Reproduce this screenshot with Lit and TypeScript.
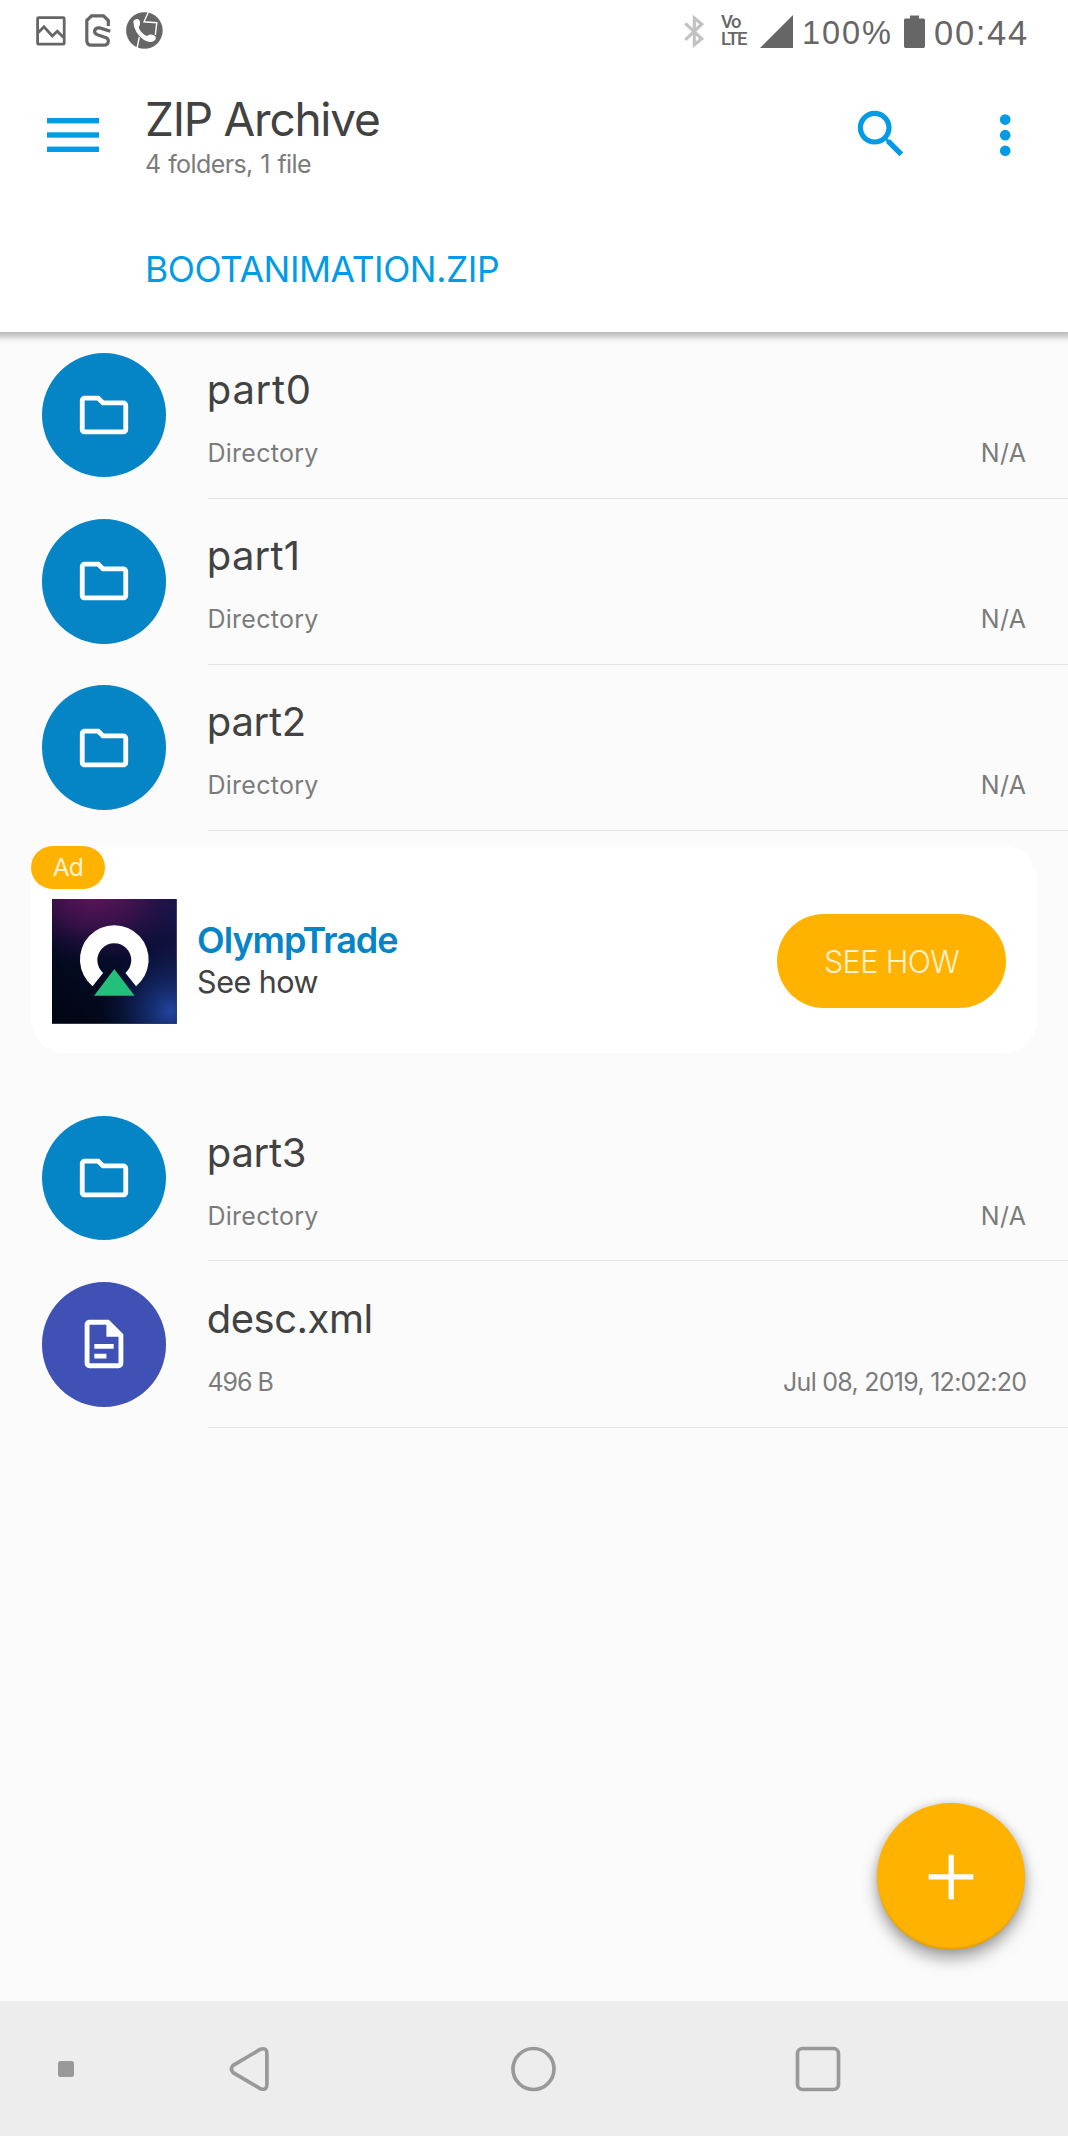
import { LitElement, html, css, svg } from "lit";
import { customElement, property } from "lit/decorators.js";

interface Entry {
  name: string;
  detail: string;
  meta: string;
  kind: "folder" | "file";
  tracking: number;
}

const FOLDER = "M9.17 6l2 2H20v10H4V6h5.17M10 4H4c-1.1 0-1.99.9-1.99 2L2 18c0 1.1.9 2 2 2h16c1.1 0 2-.9 2-2V8c0-1.1-.9-2-2-2h-8l-2-2z";
const FILE = "M6 2c-1.1 0-2 .9-2 2v16c0 1.1.9 2 2 2h12c1.1 0 2-.9 2-2V8l-6-6H6zm0 2h7v5h5v11H6V4zM8 12h8v2H8zM8 16h5v2H8z";

const folder = (name: string, tracking: number): Entry => ({
  name, detail: "Directory", meta: "N/A", kind: "folder", tracking,
});

const ABOVE_AD: Entry[] = [folder("part0", 0.7), folder("part1", 0.2), folder("part2", -0.3)];
const BELOW_AD: Entry[] = [
  folder("part3", -0.3),
  { name: "desc.xml", detail: "496 B", meta: "Jul 08, 2019, 12:02:20", kind: "file", tracking: -0.5 },
];

@customElement("status-bar")
export class StatusBar extends LitElement {
  static styles = css`
    :host { display: flex; justify-content: space-between; align-items: flex-start; height: 60px; padding: 12px 39px 0 36px; box-sizing: border-box; color: #666; font-family: "Liberation Sans", Arial, sans-serif; }
    svg { display: block; flex: none; }
    .side { display: flex; align-items: flex-start; }
    .image { margin-top: 4px; }
    .note { margin: 2px 0 0 19px; }
    .call { margin-left: 14px; }
    .bt, .signal, .battery { margin-top: 2.5px; }
    .volte { margin: 2.3px 0 0 17px; width: 27px; font: 500 18.5px/16.7px Roboto, sans-serif; letter-spacing: -1.5px; }
    .volte span { display: block; white-space: nowrap; }
    .signal { margin-left: 12px; }
    .pct { font-size: 32.5px; line-height: 42px; letter-spacing: 1.9px; margin-left: 9px; width: 102px; }
    .clock { font-size: 34.5px; line-height: 42px; letter-spacing: 1.7px; margin-left: 9px; width: 95px; white-space: nowrap; }
  `;
  render() {
    return html`
      <div class="side">
        <svg class="image" width="30" height="30" viewBox="0 0 30 30" fill="none" stroke="#666" stroke-width="2.8">
          <rect x="1.6" y="1.6" width="26.6" height="26.6" rx="1" />
          <path d="M2.3 16.5L8 10.8L16.3 20L21.3 15.3L27.3 21.3" />
        </svg>
        <svg class="note" width="27" height="34" viewBox="0 0 27 34" fill="none" stroke="#666" stroke-width="3.2">
          <path d="M23.3 12V6.5L18.5 1.9H6.5L1.8 6.5V26.5Q1.8 31.2 6.5 31.2H18.5Q23.3 31.2 23.3 27Q23.3 24.6 20.5 23.5L12.5 20.8Q9.2 19.5 9.6 16.8Q10.6 13.2 14.8 13.9L25.3 17.2" />
        </svg>
        <svg class="call" width="37" height="37" viewBox="0 0 37 37">
          <circle cx="18.4" cy="18.5" r="18.3" fill="#666" />
          <path d="M22.3 .3L18 9.8L30.8 10.7L29.3 23M13.3 25L11 36.5" fill="none" stroke="#fff" stroke-width="1.4" />
          <path d="M7.3 9.5Q8 7 11 7Q13.5 7 14 10Q14.6 13 12.8 14.5Q12.6 18 18 22.5Q21 25 23.5 22.5Q27 22 29.5 24.5Q30.5 27 28 29Q24 31.5 18 28Q8 21 7.3 9.5Z" fill="#fff" />
        </svg>
      </div>
      <div class="side">
        <svg class="bt" width="20" height="33" viewBox="0 0 20 33" fill="none" stroke="#c2c2c2" stroke-width="3.1">
          <path d="M1.3 8.3L17.7 23.8L10.3 29.8V3L17.7 9.2L1.3 24.8" />
        </svg>
        <div class="volte"><span>Vo</span><span>LTE</span></div>
        <svg class="signal" width="33" height="33" viewBox="0 0 33 33"><path d="M33 0V33H0Z" fill="#666" /></svg>
        <div class="pct">100%</div>
        <svg class="battery" width="21" height="33" viewBox="0 0 21 33"><path d="M6 .5h9v3h4.5q1.5 0 1.5 1.5v26q0 2-1.5 2h-18q-1.5 0-1.5-2V5q0-1.5 1.5-1.5H6z" fill="#666" /></svg>
        <div class="clock">00:44</div>
      </div>
    `;
  }
}

@customElement("file-row")
export class FileRow extends LitElement {
  @property({ attribute: false }) entry!: Entry;
  static styles = css`
    :host { display: flex; height: 166.2px; }
    .avatar { flex: none; display: grid; place-items: center; width: 124.5px; height: 124.5px; margin: 20.6px 41.5px 0 41.8px; border-radius: 50%; background: #0584c6; }
    .avatar.file { background: #3f51b5; }
    .body { flex: 1; display: flex; flex-direction: column; box-sizing: border-box; padding: 33.7px 41.8px 0 0; border-bottom: 1px solid #e3e3e3; }
    .name { margin-left: -1px; font-size: 40px; line-height: 48px; color: #424242; }
    .sub { display: flex; justify-content: space-between; margin-top: 22.6px; font-size: 25px; line-height: 32px; color: #7b7b7b; }
    .detail { margin-left: -0.4px; letter-spacing: 0.27px; }
    .meta { letter-spacing: 0.3px; }
    .file-text .detail { letter-spacing: -1.05px; }
    .file-text .meta { letter-spacing: -0.73px; }
  `;
  render() {
    const e = this.entry;
    return html`
      <div class="avatar ${e.kind}">
        <svg width="58" height="58" viewBox="0 0 24 24" fill="#fff"><path fill-rule="evenodd" d=${e.kind === "folder" ? FOLDER : FILE} /></svg>
      </div>
      <div class="body ${e.kind}-text">
        <div class="name" style="letter-spacing:${e.tracking}px">${e.name}</div>
        <div class="sub"><span class="detail">${e.detail}</span><span class="meta">${e.meta}</span></div>
      </div>
    `;
  }
}

@customElement("ad-card")
export class AdCard extends LitElement {
  static styles = css`
    :host { display: block; height: 207px; margin: 15px 31.3px 42.3px 31px; background: #fff; border-radius: 34px; }
    .badge { display: grid; place-items: center; width: 73.6px; height: 43px; border-radius: 22px; background: #ffb300; color: #fff2d2; font-size: 24.5px; letter-spacing: -0.9px; }
    .content { display: flex; align-items: center; padding: 10px 30.7px 0 21px; }
    .logo { display: block; flex: none; }
    .texts { flex: 1; margin: -4.6px 0 0 20.3px; }
    .title { font-size: 36px; line-height: 44px; font-weight: 600; letter-spacing: -1.03px; color: #0584c6; }
    .desc { margin-top: 2.6px; font-size: 30.5px; line-height: 36px; letter-spacing: -0.5px; color: #424242; }
    .cta { display: grid; place-items: center; width: 229px; height: 94px; border-radius: 47px; background: #ffb300; color: #fff2d2; font-size: 30.5px; font-weight: 350; letter-spacing: -0.6px; }
  `;
  render() {
    return html`
      <div class="badge">Ad</div>
      <div class="content">
        <svg class="logo" width="124.8" height="124.8" viewBox="0 0 125 125">
          <defs>
            <linearGradient id="base" x1="0" y1="1" x2=".9" y2="0">
              <stop offset="0" stop-color="#020612" /><stop offset=".5" stop-color="#040b26" /><stop offset="1" stop-color="#161449" />
            </linearGradient>
            <radialGradient id="plum" cx=".32" cy="-.08" r=".62" gradientTransform="matrix(1.25 0 0 1 -.06 0)">
              <stop offset="0" stop-color="#681560" /><stop offset=".5" stop-color="#45124f" stop-opacity=".75" /><stop offset="1" stop-color="#1a1040" stop-opacity="0" />
            </radialGradient>
            <radialGradient id="blue" cx=".95" cy=".9" r=".55">
              <stop offset="0" stop-color="#21449e" /><stop offset="1" stop-color="#102560" stop-opacity="0" />
            </radialGradient>
          </defs>
          <rect width="125" height="125" fill="url(#base)" />
          <rect width="125" height="125" fill="url(#plum)" />
          <rect width="125" height="125" fill="url(#blue)" />
          <path d="M40.6 87.3A34.4 34.4 0 1 1 84.2 87.3L73.6 74A17 17 0 1 0 51.2 74Z" fill="#fff" />
          <path d="M62.4 70L82.7 97H42.1Z" fill="#22c07a" />
        </svg>
        <div class="texts"><div class="title">OlympTrade</div><div class="desc">See how</div></div>
        <div class="cta">SEE HOW</div>
      </div>
    `;
  }
}

@customElement("app-root")
export class AppRoot extends LitElement {
  static styles = css`
    :host { display: flex; flex-direction: column; position: relative; width: 1068px; height: 2136px; background: #fbfbfb; font-family: Inter, Roboto, sans-serif; overflow: hidden; }
    svg { display: block; flex: none; }
    header { position: relative; flex: none; height: 332.4px; box-sizing: border-box; background: #fff; }
    header::after { content: ""; position: absolute; left: 0; right: 0; top: 100%; height: 11px; background: linear-gradient(#bcbcbc, #cfcfcf 35%, #efefef 70%, #fbfbfb); }
    .toolbar { display: flex; align-items: flex-start; height: 188.4px; }
    .menu { margin: 58px 46px 0 46.5px; }
    .titles { flex: 1; padding-top: 34.3px; }
    .title { font-size: 46px; line-height: 50px; letter-spacing: -1.25px; color: #424242; }
    .count { margin-top: 3.3px; font-size: 25px; line-height: 32px; letter-spacing: -0.6px; word-spacing: 1.2px; color: #7b7b7b; }
    .search { margin-top: 43px; }
    .more { margin: 43.8px 31.6px 0 61.8px; }
    .crumb { padding-left: 145px; font-size: 35.5px; line-height: 44px; letter-spacing: -0.45px; color: #039be5; }
    main { flex: 1; }
    .fab { position: absolute; left: 877.2px; top: 1803px; width: 147.5px; height: 147px; border-radius: 50%; background: #ffb300; display: grid; place-items: center; box-shadow: 0 9px 16px rgba(0, 0, 0, 0.34), 0 0 9px rgba(0, 0, 0, 0.14), inset 0 -3px 2px -1px rgba(150, 100, 0, 0.25); }
    nav { flex: none; display: flex; align-items: center; height: 135px; box-sizing: border-box; padding-left: 57.7px; background: #ededed; }
    .back { margin-left: 154.5px; }
    .home { margin-left: 239.5px; }
    .recent { margin-left: 239.5px; }
  `;
  render() {
    const row = (entry: Entry) => html`<file-row .entry=${entry}></file-row>`;
    return html`
      <header>
        <status-bar></status-bar>
        <div class="toolbar">
          <svg class="menu" width="52.5" height="34" viewBox="0 0 52.5 34" fill="#039be5">${[0, 14.3, 28.6].map((y) => svg`<rect y=${y} width="52.5" height="5.4" />`)}</svg>
          <div class="titles">
            <div class="title">ZIP Archive</div>
            <div class="count">4 folders, 1 file</div>
          </div>
          <svg class="search" width="62.4" height="62.4" viewBox="0 0 24 24" fill="#039be5"><path d="M15.5 14h-.79l-.28-.27C15.41 12.59 16 11.11 16 9.5 16 5.91 13.09 3 9.5 3S3 5.91 3 9.5 5.91 16 9.5 16c1.61 0 3.09-.59 4.23-1.57l.27.28v.79l5 4.99L20.49 19l-4.99-5zm-6 0C7.01 14 5 11.99 5 9.5S7.01 5 9.5 5 14 7.01 14 9.5 11.99 14 9.5 14z" /></svg>
          <svg class="more" width="62.4" height="62.4" viewBox="0 0 24 24" fill="#039be5"><circle cx="12" cy="6" r="2.05" /><circle cx="12" cy="12" r="2.05" /><circle cx="12" cy="18" r="2.05" /></svg>
        </div>
        <div class="crumb">BOOTANIMATION.ZIP</div>
      </header>
      <main>
        ${ABOVE_AD.map(row)}
        <ad-card></ad-card>
        ${BELOW_AD.map(row)}
      </main>
      <nav>
        <svg width="16" height="16" viewBox="0 0 16 16"><rect width="16" height="16" rx="2.5" fill="#999" /></svg>
        <svg class="back" width="43" height="46" viewBox="0 0 43 46" fill="none" stroke="#999" stroke-width="3.7"><path d="M32.5 3.2L21 10L5.2 19.3Q1.6 23 5.2 26.7L32.5 42.8Q38.9 44.7 38.9 38.5V7.5Q38.9 1.3 32.5 3.2Z" /></svg>
        <svg class="home" width="45" height="46" viewBox="0 0 45 46" fill="none" stroke="#999" stroke-width="3.7"><circle cx="22.5" cy="23" r="20.5" /></svg>
        <svg class="recent" width="46" height="46" viewBox="0 0 46 46" fill="none" stroke="#999" stroke-width="3.7"><rect x="2.5" y="2.5" width="41" height="41" rx="5" /></svg>
      </nav>
      <div class="fab"><svg width="46" height="46" viewBox="0 0 46 46" fill="#fff"><path d="M20.6 .7h5.2v19.6h19.5v5.2H25.8v19.8h-5.2V25.5H.7v-5.2h19.9z" /></svg></div>
    `;
  }
}
